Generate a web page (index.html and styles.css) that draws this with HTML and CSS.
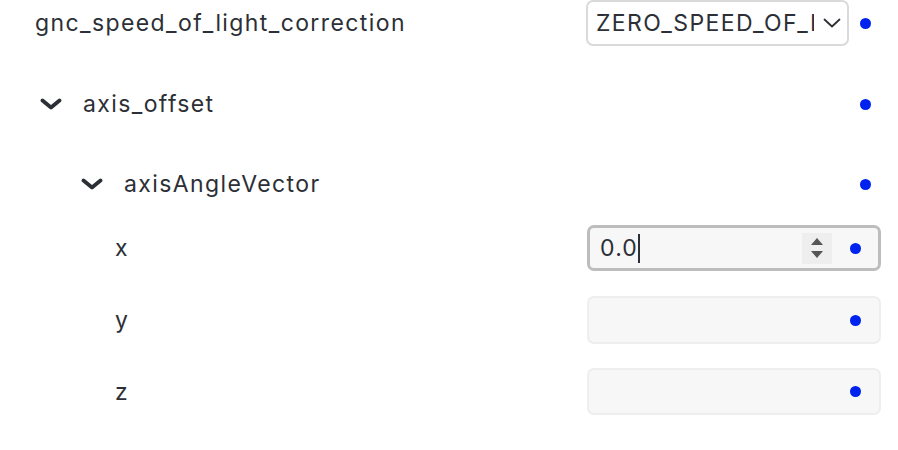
FILE: index.html
```html
<!DOCTYPE html>
<html>
<head>
<meta charset="utf-8">
<link rel="stylesheet" href="styles.css">
</head>
<body>
<div class="form">
  <div class="row r1">
    <div class="label lvl0">gnc_speed_of_light_correction</div>
    <div class="select">
      <span class="select-text">ZERO_SPEED_OF_LIGHT</span>
      <svg class="select-chev" width="18" height="10" viewBox="0 0 18 10"><path d="M1.5 1.5 L9 8.5 L16.5 1.5" fill="none" stroke="#2c2f36" stroke-width="1.8" stroke-linecap="round" stroke-linejoin="round"/></svg>
    </div>
    <span class="dot"></span>
  </div>
  <div class="row r2">
    <div class="label lvl1">
      <svg class="chev" width="22" height="12" viewBox="0 0 22 12"><path d="M2.5 2.5 L11 9.5 L19.5 2.5" fill="none" stroke="#2c2f36" stroke-width="3.8" stroke-linecap="round" stroke-linejoin="round"/></svg>
      <span>axis_offset</span>
    </div>
    <div class="spacer"></div>
    <span class="dot"></span>
  </div>
  <div class="row r3">
    <div class="label lvl2">
      <svg class="chev" width="22" height="12" viewBox="0 0 22 12"><path d="M2.5 2.5 L11 9.5 L19.5 2.5" fill="none" stroke="#2c2f36" stroke-width="3.8" stroke-linecap="round" stroke-linejoin="round"/></svg>
      <span>axisAngleVector</span>
    </div>
    <div class="spacer"></div>
    <span class="dot"></span>
  </div>
  <div class="row r4">
    <div class="label lvl3">x</div>
    <div class="input focused">
      <span class="value">0.0</span><span class="caret"></span>
      <span class="spin">
        <svg width="16" height="24" viewBox="0 0 16 24"><path d="M8 2 L14 9 L2 9 Z" fill="#555"/><path d="M2 15 L14 15 L8 22 Z" fill="#555"/></svg>
      </span>
      <span class="dot in"></span>
    </div>
  </div>
  <div class="row r5">
    <div class="label lvl3">y</div>
    <div class="input">
      <span class="dot in"></span>
    </div>
  </div>
  <div class="row r6">
    <div class="label lvl3">z</div>
    <div class="input">
      <span class="dot in"></span>
    </div>
  </div>
</div>
</body>
</html>
```
FILE: styles.css
```css
html, body {
  margin: 0;
  padding: 0;
  background: #ffffff;
}
body {
  font-family: Inter, "Noto Sans", "Liberation Sans", sans-serif;
  font-size: 23px;
  color: #2c2f36;
  width: 898px;
  height: 450px;
  overflow: hidden;
}
.form {
  display: flex;
  flex-direction: column;
}
.row {
  display: flex;
  align-items: center;
  height: 46px;
}
.r1 { margin-top: 0; }
.r2 { margin-top: 35px; }
.r3 { margin-top: 34px; }
.r4 { margin-top: 18px; }
.r5 { margin-top: 25px; height: 48px; }
.r6 { margin-top: 24px; height: 47px; }

.label {
  flex: 1;
  display: flex;
  align-items: center;
  white-space: nowrap;
  letter-spacing: 1.4px;
}
.lvl0 { padding-left: 35px; }
.lvl1 { padding-left: 40px; }
.lvl2 { padding-left: 81px; }
.lvl3 { padding-left: 115px; }
.chev { margin-right: 21px; }

.select {
  width: 263px;
  height: 46px;
  box-sizing: border-box;
  border: 2px solid #dadada;
  border-radius: 7px;
  display: flex;
  align-items: center;
  padding-left: 8px;
  padding-right: 6px;
  margin-right: 11px;
  background: #fff;
}
.select-text {
  flex: 1;
  overflow: hidden;
  white-space: nowrap;
  letter-spacing: 1.4px;
}
.select-chev {
  margin-left: 9px;
}
.spacer {
  width: 263px;
  margin-right: 11px;
}
.dot {
  display: inline-block;
  width: 11px;
  height: 11px;
  border-radius: 50%;
  background: #0022ee;
  margin-right: 27px;
}
.input {
  width: 294px;
  height: 100%;
  box-sizing: border-box;
  border: 2px solid #eeeeee;
  border-radius: 7px;
  background: #f7f7f7;
  display: flex;
  align-items: center;
  padding-left: 12px;
  padding-right: 18px;
  margin-right: 17px;
}
.input.focused {
  border: 3px solid #bdbdbd;
  padding-left: 10px;
  padding-right: 17px;
}
.value {
  letter-spacing: 1.2px;
}
.caret {
  display: inline-block;
  width: 2px;
  height: 29px;
  background: #2c2f36;
  margin-left: 0;
}
.spin {
  margin-left: auto;
  width: 30px;
  height: 31px;
  background: #eeeeee;
  display: flex;
  align-items: center;
  justify-content: center;
  margin-right: 18px;
}
.dot.in {
  margin-right: 0;
  margin-left: auto;
}
.spin + .dot.in {
  margin-left: 0;
}
```
